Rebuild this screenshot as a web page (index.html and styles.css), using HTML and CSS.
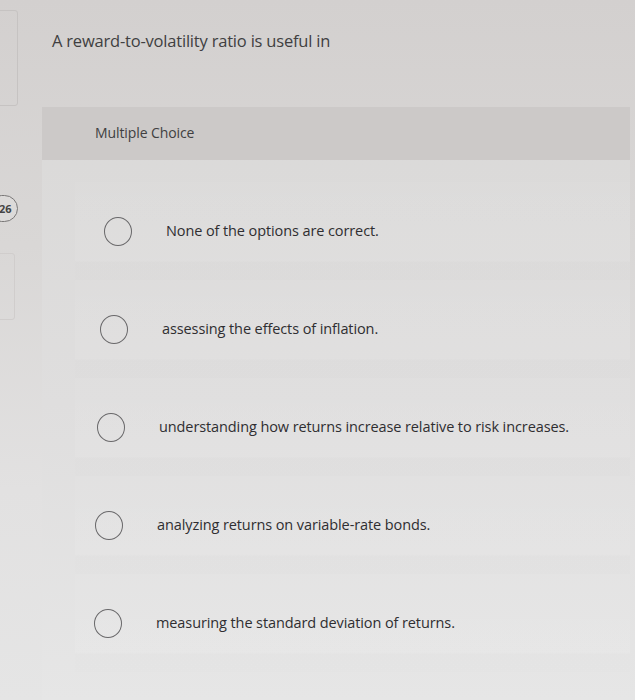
FILE: index.html
```html
<!DOCTYPE html>
<html>
<head>
<meta charset="utf-8">
<link rel="stylesheet" href="styles.css">
</head>
<body>
<div class="page">
  <aside class="sidebar">
    <div class="side-box side-box-top"></div>
    <div class="badge">26</div>
    <div class="side-box side-box-low"></div>
  </aside>
  <main class="main">
    <p class="question">A reward-to-volatility ratio is useful in</p>
    <section class="panel">
      <div class="panel-head">Multiple Choice</div>
      <ul class="options">
        <li class="option"><span class="radio"></span><span class="label">None of the options are correct.</span></li>
        <li class="option"><span class="radio"></span><span class="label">assessing the effects of inflation.</span></li>
        <li class="option"><span class="radio"></span><span class="label">understanding how returns increase relative to risk increases.</span></li>
        <li class="option"><span class="radio"></span><span class="label">analyzing returns on variable-rate bonds.</span></li>
        <li class="option"><span class="radio"></span><span class="label">measuring the standard deviation of returns.</span></li>
      </ul>
    </section>
  </main>
</div>
</body>
</html>
```
FILE: styles.css
```css
* { box-sizing: border-box; }
html, body { margin: 0; padding: 0; }
body {
  width: 635px;
  height: 700px;
  overflow: hidden;
  background: linear-gradient(180deg, #d3d0cf 0%, #d9d7d6 35%, #e2e1e1 70%, #e5e5e5 100%);
  font-family: "Open Sans", "Liberation Sans", sans-serif;
  color: #3f3e40;
}
.page {
  display: flex;
  height: 700px;
}
.sidebar {
  width: 20px;
  flex: none;
  display: flex;
  flex-direction: column;
  overflow: hidden;
}
.side-box {
  width: 30px;
  margin-left: -12px;
  border: 1px solid #c6c3c2;
  border-radius: 3px;
}
.side-box-top {
  margin-top: 10px;
  height: 96px;
}
.badge {
  margin-top: 89px;
  margin-left: -12px;
  width: 30px;
  height: 27px;
  border: 1px solid #7a7878;
  border-radius: 14px;
  background: #dcdad9;
  font-size: 11px;
  font-weight: 700;
  color: #444;
  display: flex;
  align-items: center;
  padding-left: 10px;
}
.side-box-low {
  margin-top: 31px;
  width: 27px;
  height: 67px;
  border-color: #d0cdcc;
}
.main {
  flex: 1;
  display: flex;
  flex-direction: column;
}
.question {
  margin: 29px 0 0 32px;
  height: 78px;
  font-size: 16.5px;
  line-height: 24px;
  color: #403f41;
  letter-spacing: -0.2px;
}
.panel {
  margin-left: 22px;
  width: 588px;
  flex: 1;
  background: linear-gradient(180deg, #dad9d8 0%, #dfdede 50%, #e6e6e6 100%);
}
.panel-head {
  height: 53px;
  background: #ccc9c8;
  padding: 16px 0 0 53px;
  font-size: 14px;
  line-height: 20px;
  color: #403f41;
  letter-spacing: -0.1px;
}
.options {
  list-style: none;
  margin: 22px 0 0 0;
  padding: 0;
}
.option {
  height: 98px;
  display: flex;
  align-items: center;
  padding-left: 29px;
  margin-left: 33px;
  background: linear-gradient(180deg, rgba(255,255,255,0.04) 8%, rgba(255,255,255,0.07) 80%, rgba(0,0,0,0.005) 82%);
}
.option:nth-child(2) { padding-left: 25px; }
.option:nth-child(3) { padding-left: 22px; }
.option:nth-child(4) { padding-left: 20px; }
.option:nth-child(5) { padding-left: 19px; }
.radio {
  width: 28px;
  height: 29px;
  flex: none;
  border: 1.5px solid #69686a;
  border-radius: 50%;
  margin-right: 34px;
}
.label {
  font-size: 14.5px;
  line-height: 20px;
  color: #2f2e31;
  letter-spacing: -0.1px;
}
```
